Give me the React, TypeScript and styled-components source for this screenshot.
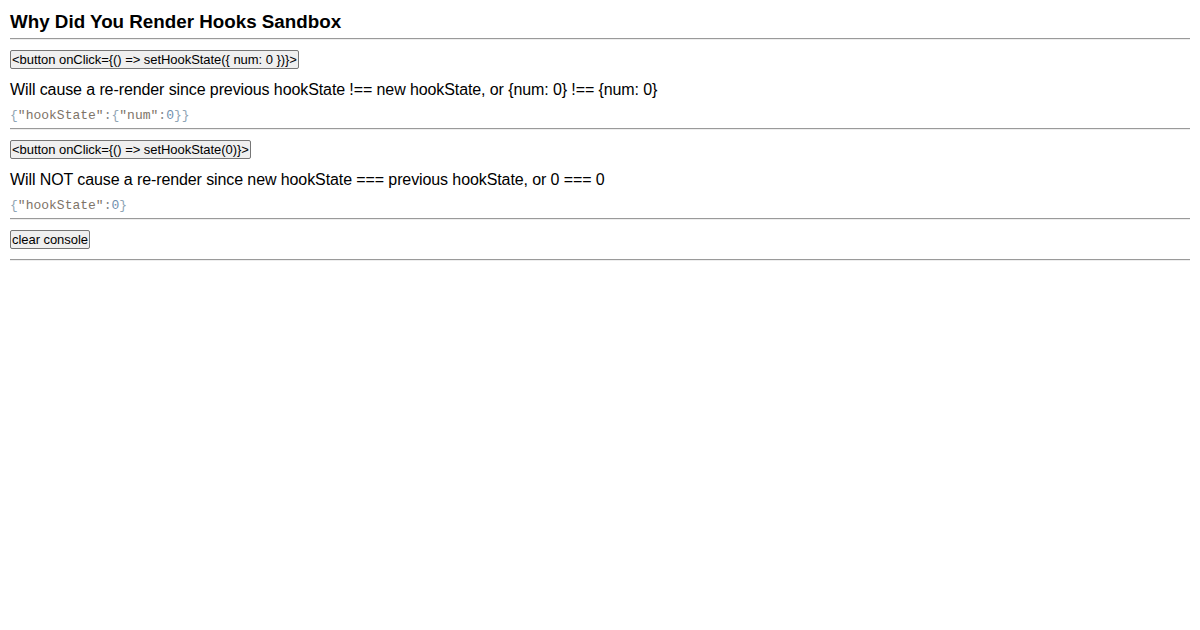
import React, { ReactElement, ReactNode } from 'react'
import styled, { createGlobalStyle } from 'styled-components'

const GlobalStyle = createGlobalStyle`
  html, body {
    margin: 0;
    padding: 0;
    background: #ffffff;
  }
  body {
    font-family: "Liberation Sans", Arial, sans-serif;
    color: #000000;
  }
`

interface JsonProps {
  value: unknown
}

// tiny json printer that colours the tokens like the sandbox did
const JsonValue = ({ value }: JsonProps): ReactElement => {
  if (value !== null && typeof value === 'object') {
    const entries = Object.entries(value as Record<string, unknown>)
    const parts: ReactNode[] = []
    entries.forEach(([key, val], i) => {
      if (i > 0) parts.push(<Punct key={`c${i}`}>,</Punct>)
      parts.push(<Str key={`k${i}`}>"{key}"</Str>)
      parts.push(<Punct key={`p${i}`}>:</Punct>)
      parts.push(<JsonValue key={`v${i}`} value={val} />)
    })
    return (
      <>
        <Brace>{'{'}</Brace>
        {parts}
        <Brace>{'}'}</Brace>
      </>
    )
  }
  if (typeof value === 'number') return <Num>{value}</Num>
  return <Str>"{String(value)}"</Str>
}

interface SectionProps {
  button: string
  note?: string
  state?: unknown
  last?: boolean
}

const Section = ({ button, note, state, last }: SectionProps): ReactElement => (
  <>
    <Block $last={last}>
      <div>
        <Button>{button}</Button>
      </div>
      {note && <Note>{note}</Note>}
      {state !== undefined && (
        <Json>
          <JsonValue value={state} />
        </Json>
      )}
    </Block>
    <Rule />
  </>
)

export default function App(): ReactElement {
  return (
    <Page>
      <GlobalStyle />
      <Title>Why Did You Render Hooks Sandbox</Title>
      <Rule />
      <Section
        button="<button onClick={() => setHookState({ num: 0 })}>"
        note="Will cause a re-render since previous hookState !== new hookState, or {num: 0} !== {num: 0}"
        state={{ hookState: { num: 0 } }}
      />
      <Section
        button="<button onClick={() => setHookState(0)}>"
        note="Will NOT cause a re-render since new hookState === previous hookState, or 0 === 0"
        state={{ hookState: 0 }}
      />
      <Section button="clear console" last />
    </Page>
  )
}

const Page = styled.div`
  padding: 11px 10px 0;
`

const Title = styled.h1`
  margin: 0 0 5px;
  font-size: 18.8px;
  line-height: 22px;
  font-weight: bold;
`

const Rule = styled.hr`
  margin: 0;
  height: 0;
  border: 0;
  border-top: 1px solid #9a9a9a;
  border-bottom: 1px solid #eeeeee;
`

const Block = styled.div<{ $last?: boolean }>`
  display: flex;
  flex-direction: column;
  align-items: flex-start;
  padding: 10px 0 ${(p) => (p.$last ? 10 : 5)}px;
`

const Button = styled.button`
  font-family: "Liberation Sans", Arial, sans-serif;
  font-size: 13px;
  line-height: 15px;
  letter-spacing: -0.05px;
  color: #000000;
  background: #efefef;
  border: 1px solid #767676;
  border-radius: 2px;
  padding: 1px 1px;
  margin: 0;
`

const Note = styled.p`
  margin: 12px 0 0;
  font-size: 16px;
  line-height: 18px;
  letter-spacing: -0.1px;
`

const Json = styled.div`
  margin-top: 10px;
  font-family: "Liberation Mono", "Courier New", monospace;
  font-size: 13px;
  line-height: 14px;
  color: #888888;
`

const Brace = styled.span`
  color: #8fa5b5;
`

const Punct = styled.span`
  color: #888888;
`

const Str = styled.span`
  color: #7e7468;
`

const Num = styled.span`
  color: #6f8fae;
`
